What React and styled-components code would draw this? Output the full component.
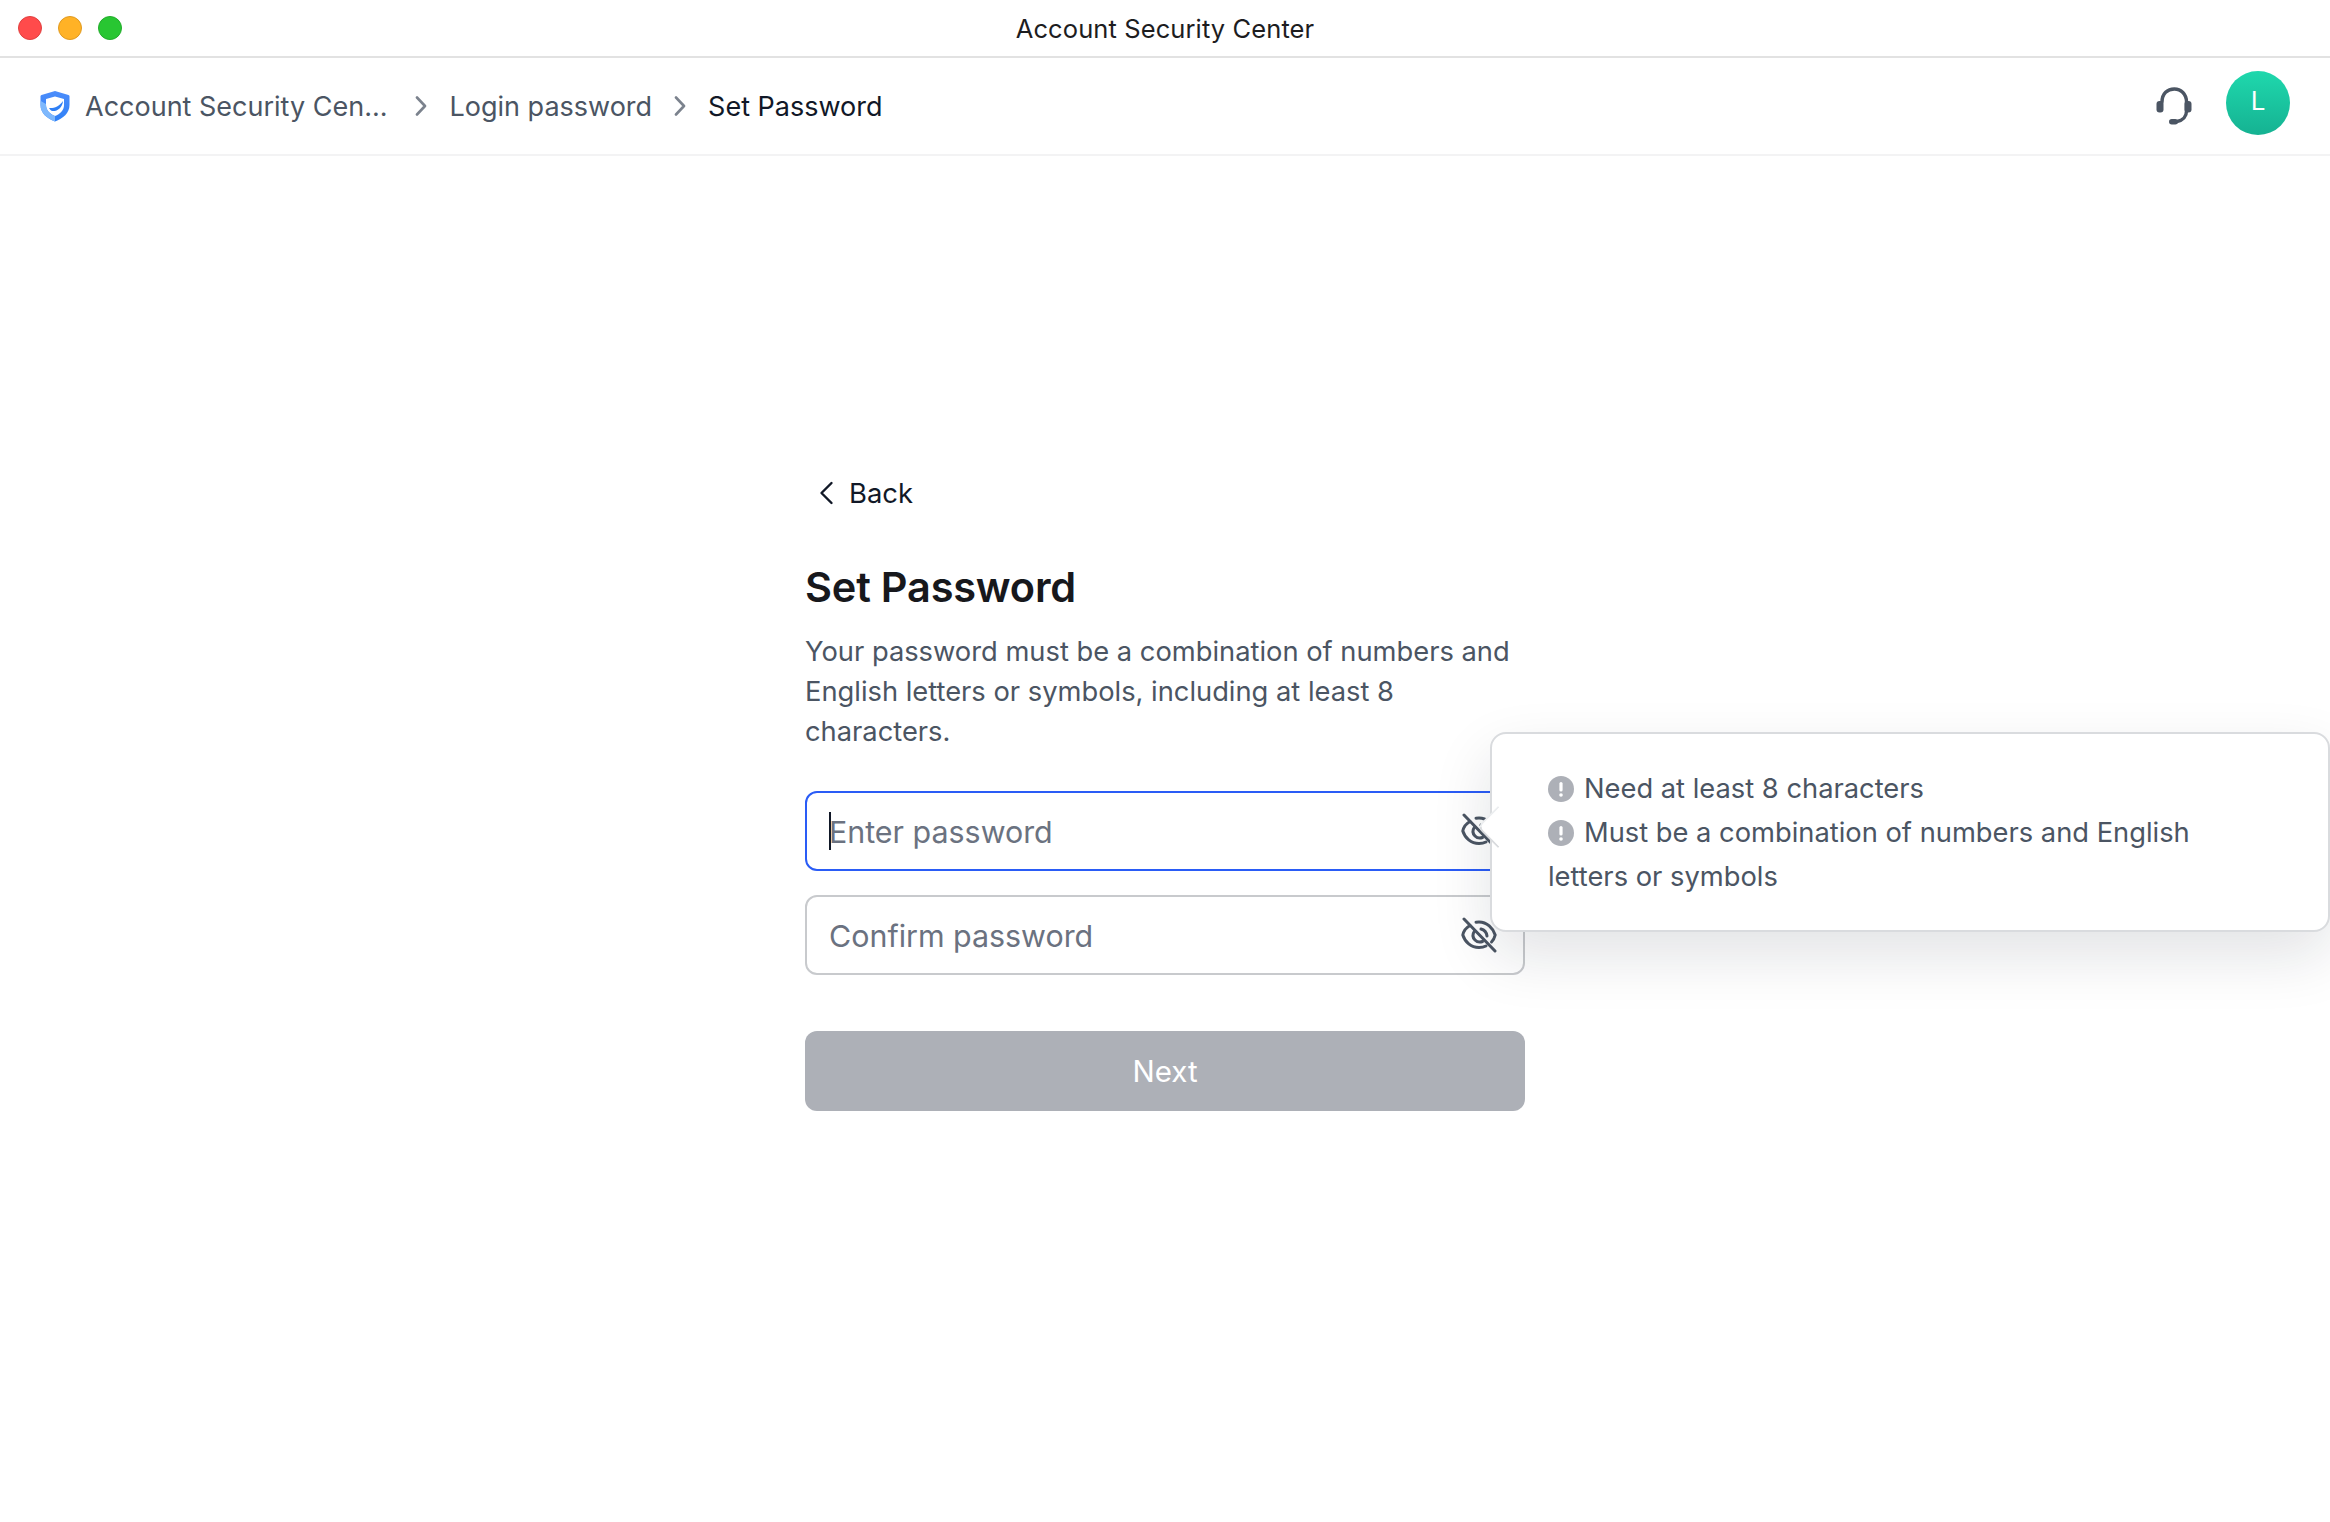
import React from "react";
import styled, { createGlobalStyle } from "styled-components";

const Global = createGlobalStyle`
  html, body { margin: 0; padding: 0; background: #fff; }
  body { font-family: Inter, "Liberation Sans", sans-serif; width: 2330px; height: 1522px; overflow: hidden; }
`;
const Page = styled.div`display: flex; flex-direction: column; width: 2330px; height: 1522px;`;
const TitleBar = styled.div`
  flex: none; display: grid; grid-template-columns: 1fr auto 1fr; align-items: center; height: 56px;
  border-bottom: 2px solid #e2e2e2; padding: 0 18px;
`;
const Lights = styled.div`display: flex; gap: 16px;`;
const Light = styled.span`
  width: 24px; height: 24px; border-radius: 50%; background: ${p => p.$c};
  box-sizing: border-box; border: 1px solid ${p => p.$b};
`;
const WindowTitle = styled.div`font-size: 25.5px; color: #1d1d1f; letter-spacing: 0.1px;`;
const Header = styled.header`
  flex: none; height: 96px; display: flex; align-items: center; padding: 0 40px; border-bottom: 2px solid #f3f3f4;
`;
const Crumbs = styled.nav`display: flex; align-items: center; flex: 1; font-size: 27px; color: #4b5563;`;
const CrumbIcon = styled.svg`width: 30px; height: 32px; margin-right: 15px; flex: none;`;
const Sep = styled.svg`width: 14px; height: 20px; margin: 0 21px; flex: none;`;
const Crumb = styled.span`
  color: ${p => (p.$current ? "#111827" : "#4b5563")};
  padding-right: ${p => (p.$truncated ? 6 : 0)}px;
`;
const Tools = styled.div`display: flex; align-items: center; gap: 34px; margin-top: -7px;`;
const HeadIcon = styled.svg`width: 36px; height: 38px; margin-top: 7px;`;
const Avatar = styled.div`
  width: 64px; height: 64px; border-radius: 50%; display: flex; align-items: center; justify-content: center;
  background: linear-gradient(180deg, #1fd8ad, #15b292); color: #fff; font-size: 26px; padding-bottom: 4px; box-sizing: border-box;
`;
const Main = styled.main`flex: 1; display: flex; justify-content: center; position: relative;`;
const Form = styled.section`width: 720px; padding-top: 320px; display: flex; flex-direction: column;`;
const Back = styled.div`display: flex; align-items: center; gap: 15px; padding-left: 14px; font-size: 27.4px; color: #111827; height: 34px;`;
const BackIcon = styled.svg`width: 15px; height: 24px;`;
const Title = styled.h1`margin: 51px 0 0; font-size: 41.5px; line-height: 52px; font-weight: 600; color: #17181c; letter-spacing: -0.2px;`;
const Desc = styled.p`margin: 19px 0 0; font-size: 27.3px; line-height: 40px; color: #4b5563;`;
const Field = styled.div`
  position: relative; display: flex; align-items: center; height: 80px; box-sizing: border-box; margin-top: ${p => p.$mt}px;
  border-radius: 12px; border: 2px solid ${p => (p.$focus ? "#2a5cf6" : "#c8cacd")}; padding: 0 26px 0 22px;
`;
const Input = styled.input`
  flex: 1; min-width: 0; border: 0; outline: 0; background: transparent; font: inherit; font-size: 30.4px; color: #111827; padding: 2px 0 0;
  &::placeholder { color: #6b7280; opacity: 1; }
`;
const Caret = styled.span`position: absolute; left: 22px; top: 19px; width: 2px; height: 38px; background: #111827;`;
const EyeIcon = styled.svg`width: 36px; height: 36px; flex: none;`;
const Next = styled.button`
  margin-top: 56px; height: 80px; border: 0; border-radius: 12px; background: #adb0b7; color: #fff; font: inherit; font-size: 29.5px;
`;
const Tip = styled.aside`
  position: absolute; left: 1490px; top: 576px; width: 840px; box-sizing: border-box; padding: 33px 60px 31px 56px;
  background: #fff; border: 2px solid #d9dbde; border-radius: 16px; font-size: 27.3px; line-height: 44px; color: #4b5563;
  box-shadow: 0 24px 60px rgba(17, 24, 39, 0.12);
`;
const TipArrow = styled.span`
  position: absolute; left: -9px; top: 78px; width: 30px; height: 30px; background: #fff; transform: rotate(45deg);
  border-left: 2px solid #eceef0; border-bottom: 2px solid #d9dbde; border-radius: 0 0 0 7px; box-sizing: border-box;
`;
const TipIcon = styled.svg`width: 26px; height: 26px; vertical-align: -4px; margin-right: 10px;`;

const Eye = () => (
  <EyeIcon viewBox="0 0 36 36" fill="none" stroke="#4b5563" strokeWidth="3" strokeLinecap="round" strokeLinejoin="round">
    <path d="M9 8.5 C4.5 11 2.5 14.5 1.8 18 C4 25 10 30.5 18 30.5 C20.5 30.5 23 30 25 29" />
    <path d="M15 5.2 C16 5.1 17 5 18 5 C26 5 32 11 34.2 18 C33.6 20.5 32.5 23 30.5 25" />
    <path d="M13.5 14 C11.5 17 11.5 20.5 14 23 C16 25 19 25.5 21.5 24.5" />
    <path d="M20 12 C23.5 12.8 25.5 15.5 26 19" />
    <path d="M3 2 L34 34" />
  </EyeIcon>
);
const Info = () => (
  <TipIcon viewBox="0 0 26 26">
    <circle cx="13" cy="13" r="13" fill="#adb0b7" />
    <rect x="11.4" y="6" width="3.2" height="9.5" rx="1.6" fill="#fff" />
    <circle cx="13" cy="19" r="1.8" fill="#fff" />
  </TipIcon>
);
const Chevron = () => (
  <Sep viewBox="0 0 14 20" fill="none" stroke="#7b828d" strokeWidth="2.6" strokeLinecap="round" strokeLinejoin="round">
    <path d="M3 1.5 L11 10 L3 18.5" />
  </Sep>
);

export default function App() {
  return (
    <Page>
      <Global />
      <TitleBar>
        <Lights>
          <Light $c="#ff4b4b" $b="#e0403f" />
          <Light $c="#ffb226" $b="#e09a20" />
          <Light $c="#28c632" $b="#22ac2b" />
        </Lights>
        <WindowTitle>Account Security Center</WindowTitle>
      </TitleBar>
      <Header>
        <Crumbs>
          <CrumbIcon viewBox="0 0 30 32">
            <defs>
              <linearGradient id="sh" x1="0" y1="0" x2="0" y2="1">
                <stop offset="0" stopColor="#4c8dfb" />
                <stop offset="1" stopColor="#2f80f6" />
              </linearGradient>
            </defs>
            <path d="M15 1 L28.5 5 Q29.5 5.3 29.5 6.5 L29.5 15 C29.5 23 23 28.5 15 31.5 C7 28.5 0.5 23 0.5 15 L0.5 6.5 Q0.5 5.3 1.5 5 Z" fill="url(#sh)" />
            <path d="M15 6.5 L24 9 L24 15 C24 20.5 20 24 15 26 C10 24 6 20.5 6 15 L6 9 Z" fill="#fff" />
            <path d="M0.8 11 L6 14 C6 20.5 10 24 15 26 L15 31.5 C7 28.5 0.5 23 0.5 15 Z" fill="#7eb8fc" />
            <path d="M9 18 C14 18.5 19 16.5 23 11 C22.5 18 17 21.5 12.5 21 C11 20.8 9.8 19.5 9 18 Z" fill="#2f7ff5" />
          </CrumbIcon>
          <Crumb $truncated>Account Security Cen...</Crumb>
          <Chevron />
          <Crumb>Login password</Crumb>
          <Chevron />
          <Crumb $current>Set Password</Crumb>
        </Crumbs>
        <Tools>
          <HeadIcon viewBox="0 0 36 38" fill="none">
            <path d="M6 15 C6 6.5 11.5 2 18.3 2 C25 2 30.5 7 30.5 15 V24 C30.5 29.5 27 33.5 21 34.5" stroke="#4b5563" strokeWidth="3.4" strokeLinecap="round" />
            <rect x="0.5" y="14" width="7" height="11.5" rx="3" fill="#4b5563" />
            <rect x="28.5" y="14" width="7" height="11.5" rx="3" fill="#4b5563" />
            <rect x="13" y="32" width="9" height="5.5" rx="2.75" fill="#4b5563" />
          </HeadIcon>
          <Avatar>L</Avatar>
        </Tools>
      </Header>
      <Main>
        <Form>
          <Back>
            <BackIcon viewBox="0 0 15 24" fill="none" stroke="#111827" strokeWidth="2.4" strokeLinecap="round" strokeLinejoin="round">
              <path d="M12.5 2 L2.5 12 L12.5 22" />
            </BackIcon>
            Back
          </Back>
          <Title>Set Password</Title>
          <Desc>Your password must be a combination of numbers and English letters or symbols, including at least 8 characters.</Desc>
          <Field $focus $mt={39}>
            <Input placeholder="Enter password" />
            <Caret />
            <Eye />
          </Field>
          <Field $mt={24}>
            <Input placeholder="Confirm password" />
            <Eye />
          </Field>
          <Next>Next</Next>
        </Form>
        <Tip>
          <TipArrow />
          <div><Info />Need at least 8 characters</div>
          <div><Info />Must be a combination of numbers and English letters or symbols</div>
        </Tip>
      </Main>
    </Page>
  );
}
